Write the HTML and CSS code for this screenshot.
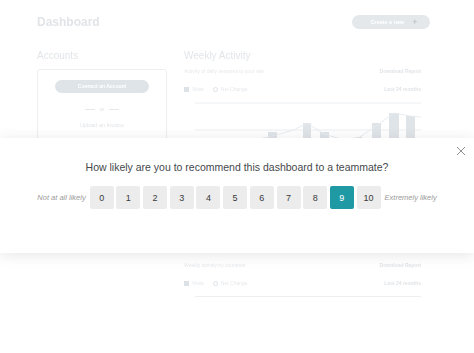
FILE: index.html
```html
<!DOCTYPE html>
<html lang="en">
<head>
<meta charset="utf-8">
<title>Dashboard – NPS survey</title>
<link rel="stylesheet" href="styles.css">
</head>
<body>
<div class="dashboard">
  <header class="dash-header">
    <h1 class="dash-title">Dashboard</h1>
    <button class="create-btn"><span>Create a new</span><span class="plus">+</span></button>
  </header>
  <div class="dash-main">
    <section class="col-left">
      <h2 class="sec-title">Accounts</h2>
      <div class="acc-card">
        <div class="connect-btn">Connect an Account</div>
        <div class="or-row"><span class="or-line"></span><span>or</span><span class="or-line"></span></div>
        <div class="upload">Upload an Invoice</div>
      </div>
    </section>
    <section class="col-right">
      <h2 class="sec-title">Weekly Activity</h2>
      <div class="sub-row"><span>Activity of daily sessions to your site</span><span class="dl">Download Report</span></div>
      <div class="legend-row">
        <span class="legend"><span class="sq"></span>Visits<span class="circ"></span>Net Change</span>
        <span class="dl">Last 24 months</span>
      </div>
      <svg class="chart" width="237" height="150" viewBox="0 0 237 150">
        <line x1="11" y1="7" x2="237" y2="7" stroke="#eceef0" stroke-width="1"/>
        <line x1="11" y1="34" x2="237" y2="34" stroke="#eceef0" stroke-width="1"/>
        <line x1="11" y1="61" x2="237" y2="61" stroke="#eceef0" stroke-width="1"/>
        <g fill="#dfe4e8">
          <rect x="84" y="36" width="9" height="114"/>
          <rect x="119" y="27" width="8" height="123"/>
          <rect x="136" y="36" width="9" height="114"/>
          <rect x="172" y="41" width="6" height="109"/>
          <rect x="188" y="27" width="9" height="123"/>
          <rect x="205" y="17" width="10" height="133"/>
          <rect x="222" y="20" width="9" height="130"/>
        </g>
        <polyline points="70,44 88,40 110,34 123,27 140,38 160,44 176,41 192,30 210,17 226,20 237,21" fill="none" stroke="#e9ecef" stroke-width="1"/>
      </svg>
      <div class="sub-row second"><span>Weekly activity by countries</span><span class="dl">Download Report</span></div>
      <div class="legend-row">
        <span class="legend"><span class="sq"></span>Visits<span class="circ"></span>Net Change</span>
        <span class="dl">Last 24 months</span>
      </div>
      <div class="rule"></div>
    </section>
  </div>
</div>

<div class="nps-modal" role="dialog" aria-label="Survey">
  <button class="close" aria-label="Close">
    <svg width="10" height="10" viewBox="0 0 10 10"><path d="M1 1L9 9M9 1L1 9" stroke="#8f8f8f" stroke-width="1" fill="none"/></svg>
  </button>
  <p class="question">How likely are you to recommend this dashboard to a teammate?</p>
  <div class="scale">
    <span class="scale-label">Not at all likely</span>
    <div class="scale-btns">
      <button class="score">0</button>
      <button class="score">1</button>
      <button class="score">2</button>
      <button class="score">3</button>
      <button class="score">4</button>
      <button class="score">5</button>
      <button class="score">6</button>
      <button class="score">7</button>
      <button class="score">8</button>
      <button class="score selected">9</button>
      <button class="score">10</button>
    </div>
    <span class="scale-label">Extremely likely</span>
  </div>
</div>
</body>
</html>
```

FILE: styles.css
```css
* { box-sizing: border-box; }

html, body {
  margin: 0;
  padding: 0;
  background: #ffffff;
  height: 100%;
  overflow: hidden;
}

body {
  font-family: "Liberation Sans", Arial, sans-serif;
  position: relative;
}

/* ---------- faded dashboard behind the survey ---------- */
.dashboard {
  padding: 0 44px 0 37px;
  filter: blur(0.7px);
  color: #e3e6e9;
}

.dash-header {
  height: 44px;
  display: flex;
  align-items: center;
  justify-content: space-between;
}

.dash-title {
  margin: 0;
  font-size: 12px;
  font-weight: bold;
  color: #e1e5e8;
}

.create-btn {
  width: 78px;
  height: 14px;
  border: 0;
  border-radius: 7px;
  background: #e4e8eb;
  color: #fff;
  font-family: inherit;
  font-size: 5.5px;
  font-weight: bold;
  display: flex;
  align-items: center;
  justify-content: center;
  gap: 8px;
  padding: 0 0 0 6px;
}

.create-btn .plus {
  color: #b5b9bc;
  font-size: 9px;
  font-weight: normal;
}

.dash-main {
  margin-top: 5px;
  display: grid;
  grid-template-columns: 130px 1fr;
  column-gap: 17px;
}

.sec-title {
  margin: 0;
  height: 14px;
  line-height: 14px;
  font-size: 10px;
  font-weight: normal;
  color: #e2e5e8;
}

.acc-card {
  margin-top: 6px;
  height: 150px;
  border: 1px solid #eceef0;
  border-radius: 3px;
  padding: 10px 17px 0;
  display: flex;
  flex-direction: column;
  align-items: stretch;
}

.connect-btn {
  height: 13px;
  border-radius: 7px;
  background: #dfe4e8;
  color: #fff;
  font-size: 5px;
  font-weight: bold;
  line-height: 13px;
  text-align: center;
}

.or-row {
  margin-top: 13px;
  display: flex;
  justify-content: center;
  align-items: center;
  gap: 5px;
  font-size: 5px;
  color: #e0e3e6;
}

.or-line {
  width: 10px;
  height: 1px;
  background: #e6e8ea;
}

.upload {
  margin-top: 10px;
  text-align: center;
  font-size: 5.5px;
  color: #e0e3e6;
}

.col-right {
  display: flex;
  flex-direction: column;
  padding-right: 9px;
}

.sub-row,
.legend-row {
  display: flex;
  justify-content: space-between;
  align-items: center;
  height: 8px;
  font-size: 5px;
  color: #e6e8eb;
}

.sub-row { margin-top: 4px; }
.legend-row { margin-top: 10px; }

.sub-row .dl,
.legend-row .dl {
  color: #e0e3e6;
  font-weight: bold;
}

.legend {
  display: flex;
  align-items: center;
  gap: 3px;
}

.sq {
  width: 5px;
  height: 5px;
  background: #dde2e6;
}

.circ {
  width: 5px;
  height: 5px;
  margin-left: 6px;
  border: 1px solid #dde2e6;
  border-radius: 50%;
}

.chart {
  display: block;
  margin-top: 3px;
}

.sub-row.second { margin-top: 15px; }

.rule {
  margin: 9px 0 0 11px;
  height: 1px;
  background: #eceef0;
}

/* ---------- survey overlay ---------- */
.nps-modal {
  position: absolute;
  top: 138px;
  left: 0;
  right: 0;
  height: 115px;
  background: #ffffff;
  box-shadow: 0 2px 14px rgba(0, 0, 0, 0.1);
  display: flex;
  flex-direction: column;
  align-items: center;
  padding-top: 22px;
}

.close {
  position: absolute;
  top: 8px;
  right: 8px;
  width: 10px;
  height: 10px;
  padding: 0;
  border: 0;
  background: none;
  display: flex;
}

.question {
  margin: 0;
  height: 14px;
  line-height: 14px;
  font-size: 10.5px;
  color: #45484b;
}

.scale {
  margin-top: 12px;
  display: flex;
  align-items: center;
  gap: 4px;
}

.scale-label {
  font-size: 7.5px;
  font-style: italic;
  color: #9a9a9a;
}

.scale-btns {
  display: flex;
  gap: 2.7px;
}

.score {
  width: 24px;
  height: 23px;
  padding: 0;
  border: 0;
  border-radius: 2px;
  background: #ececec;
  color: #3a3a3a;
  font-family: inherit;
  font-size: 9px;
}

.score.selected {
  background: #1f9aa4;
  color: #ffffff;
}
```
